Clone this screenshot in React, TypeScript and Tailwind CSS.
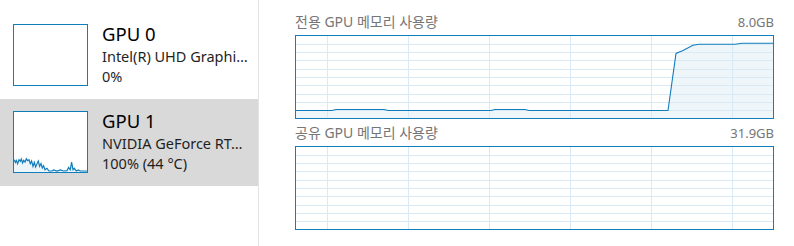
const BLUE = '#117dbb'
const GRID = '#d9eaf4'

const hLines = [8, 16, 24, 33, 41, 49, 58, 66, 74]
const vLines = [31, 112, 193, 274, 355, 436]

const dedicatedLine =
  '0,74.5 36,74.5 40,73.5 88,73.5 92,74.5 195,74.5 199,73.5 229,73.5 233,74.5 372,74.5 380,17.5 387,14.5 397,9.3 403,8.3 439,8.3 446,7.3 477,7.3'

const thumbLine =
  '0.3,47.7 1.3,50.4 2.3,48.4 3.6,51.7 5,47.7 6.3,49.4 7.3,47 8.6,51 9.6,48.4 11,50 12.3,46.7 13.6,48.7 15,47.7 16.3,51.7 17.6,49 19,54.4 20.3,50.4 21.6,55 23,51.7 24.3,49 25.6,54.4 27,51.7 28.3,56 29.6,53.7 31,57.7 33,56.3 35,59 38,59 39.6,58 43,59 46.3,58 49.6,59 53,58.7 54.6,55.4 56.3,57.7 57.6,50 59,57.7 60.3,56.3 62.3,59 64.3,58 66.3,59 73,59'

function MemoryChart({ line }: { line?: string }) {
  return (
    <div className="border border-[#117dbb] w-[479px] h-[84px] bg-white">
      <svg width="477" height="82" viewBox="0 0 477 82" className="block">
        {line && <polygon points={`0,82 ${line} 477,82`} fill={BLUE} fillOpacity={0.065} />}
        {hLines.map((y) => (
          <line key={`h${y}`} x1="0" x2="477" y1={y + 0.5} y2={y + 0.5} stroke={GRID} strokeWidth="1" />
        ))}
        {vLines.map((x) => (
          <line key={`v${x}`} y1="0" y2="82" x1={x + 0.5} x2={x + 0.5} stroke={GRID} strokeWidth="1" />
        ))}
        {line && <polyline points={line} fill="none" stroke={BLUE} strokeWidth="1.1" />}
      </svg>
    </div>
  )
}

function GpuRow({
  name,
  model,
  usage,
  selected,
  spark,
}: {
  name: string
  model: string
  usage: string
  selected?: boolean
  spark?: string
}) {
  return (
    <div className={`flex items-start h-[87px] pl-[13px] pt-[10px] ${selected ? 'bg-[#d9d9d9]' : ''}`}>
      <div className="mt-[2px] w-[75px] h-[62px] border border-[#117dbb] bg-white shrink-0">
        {spark && (
          <svg width="73" height="60" viewBox="0 0 73 60" className="block">
            <polygon points={`0,60 ${spark} 73,60`} fill={BLUE} fillOpacity={0.08} />
            <polyline points={spark} fill="none" stroke={BLUE} strokeWidth="1.2" />
          </svg>
        )}
      </div>
      <div className="ml-[14px] flex flex-col whitespace-nowrap">
        <div className="text-[18.5px] leading-[24px] text-black">{name}</div>
        <div className="text-[14.5px] leading-[20px] text-[#1f1f1f]">{model}</div>
        <div className="text-[14.5px] leading-[20px] text-[#1f1f1f]">{usage}</div>
      </div>
    </div>
  )
}

function ChartTitle({ label, value }: { label: string; value: string }) {
  return (
    <div className="h-[27px] flex items-end justify-between pb-[6px] leading-none text-[#767676]">
      <span className="text-[14px]">{label}</span>
      <span className="text-[13px]">{value}</span>
    </div>
  )
}

export default function App() {
  return (
    <div className="flex w-[794px] h-[246px] bg-white font-['Noto_Sans','Noto_Sans_CJK_KR',sans-serif]">
      <div className="w-[259px] shrink-0 border-r border-[#e3e3e3] pt-3">
        <GpuRow name="GPU 0" model="Intel(R) UHD Graphi…" usage="0%" />
        <GpuRow name="GPU 1" model="NVIDIA GeForce RT…" usage="100% (44 °C)" selected spark={thumbLine} />
      </div>
      <div className="flex flex-col pl-[36px] pt-2 w-[515px]">
        <ChartTitle label="전용 GPU 메모리 사용량" value="8.0GB" />
        <MemoryChart line={dedicatedLine} />
        <ChartTitle label="공유 GPU 메모리 사용량" value="31.9GB" />
        <MemoryChart />
      </div>
    </div>
  )
}
